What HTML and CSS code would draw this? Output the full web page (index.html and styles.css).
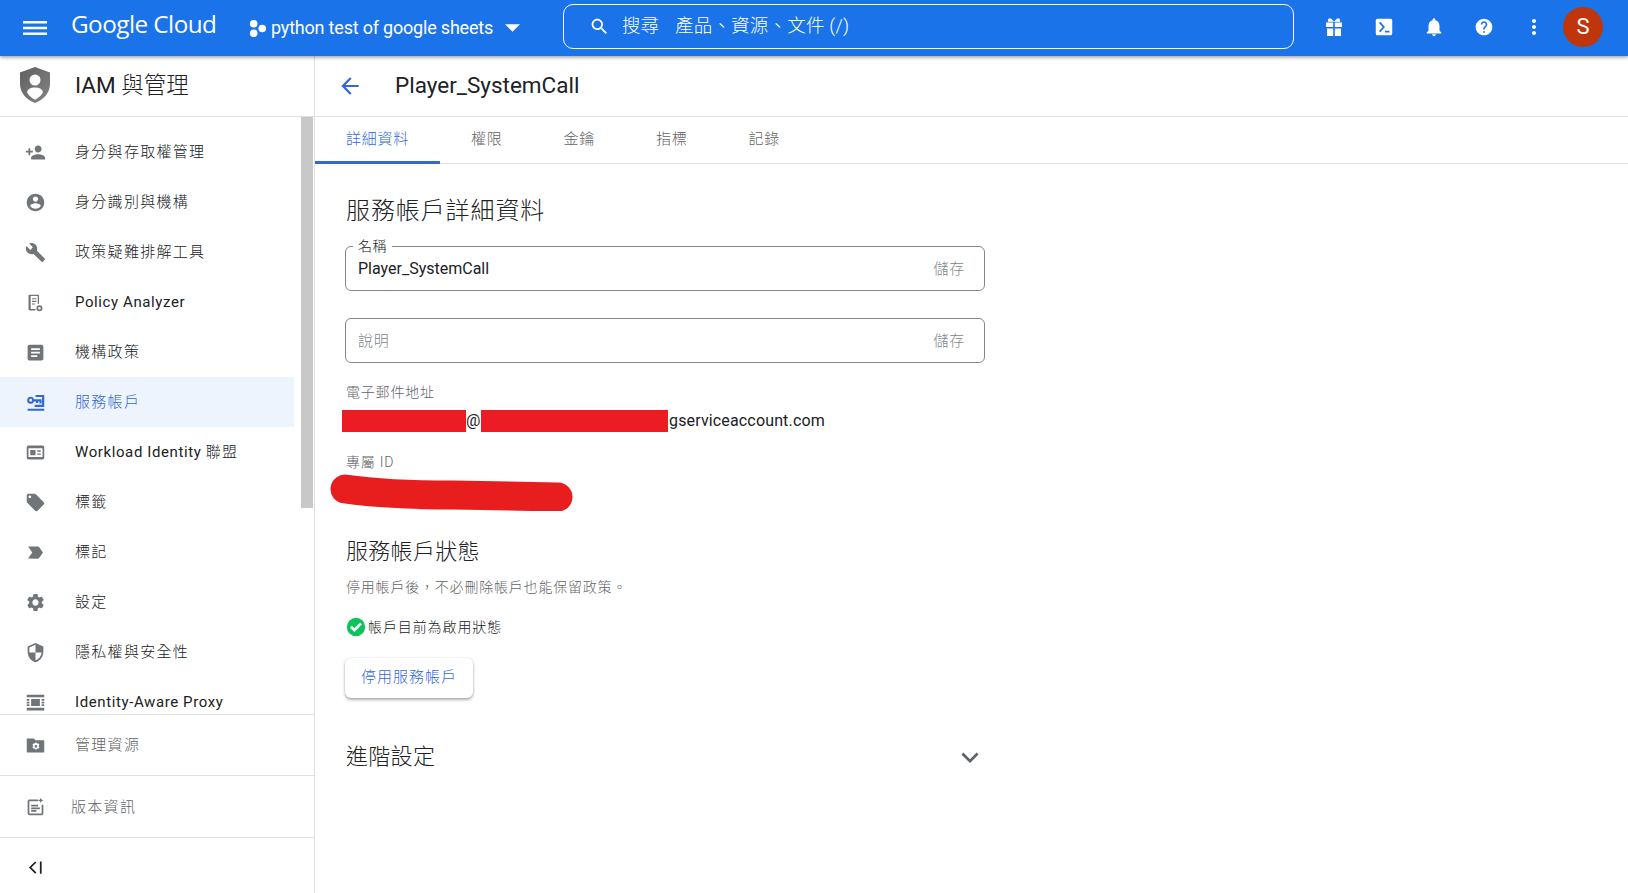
FILE: index.html
```html
<!DOCTYPE html>
<html lang="zh-Hant">
<head>
<meta charset="utf-8">
<title>Player_SystemCall - IAM 與管理</title>
<link rel="stylesheet" href="styles.css">
</head>
<body>
<header class="topbar">
  <svg class="menu-icon" viewBox="0 0 24 24"><path d="M0 19h24v-2.4H0zM0 13.2h24v-2.4H0zM0 5v2.4h24V5z"/></svg>
  <div class="brand">Google Cloud</div>
  <div class="project">
    <svg class="project-dots" viewBox="0 0 20 20"><circle cx="6" cy="5" r="4"/><circle cx="6" cy="15" r="4"/><circle cx="15" cy="10" r="4"/></svg>
    <span>python test of google sheets</span>
    <svg class="project-caret" viewBox="0 0 16 8"><path d="M0 0h16L8 8z"/></svg>
  </div>
  <div class="search">
    <svg class="search-icon" viewBox="0 0 24 24"><path d="M15.5 14h-.79l-.28-.27C15.41 12.59 16 11.11 16 9.5 16 5.91 13.09 3 9.5 3S3 5.91 3 9.5 5.91 16 9.5 16c1.61 0 3.09-.59 4.23-1.57l.27.28v.79l5 4.99L20.49 19l-4.99-5zm-6 0C7.01 14 5 11.99 5 9.5S7.01 5 9.5 5 14 7.01 14 9.5 11.99 14 9.5 14z"/></svg>
    <span class="search-a">搜尋</span><span class="search-b">產品、資源、文件 (/)</span>
  </div>
  <div class="actions">
    <svg class="action" viewBox="0 0 24 24"><path d="M4 7.500h7.200V12H4zM12.800 7.500H20V12h-7.200zM5 13.500h6.200V21H5zM12.800 13.500H19V21h-6.200zM6.500 3.500h2.500l3 3 3-3h2.500l.8 3.200H5.700z"/></svg>
    <svg class="action tight" viewBox="0 0 24 24"><path fill-rule="evenodd" d="M5 3h14a2 2 0 0 1 2 2v14a2 2 0 0 1-2 2H5a2 2 0 0 1-2-2V5a2 2 0 0 1 2-2zm1.500 4.500L10.500 12l-4 4.500 1.500 1.300 5-5.800-5-5.800zM13 16v2h5v-2z"/></svg>
    <svg class="action tight" viewBox="0 0 24 24"><path d="M12 22c1.100 0 2-.9 2-2h-4c0 1.100.89 2 2 2zm6-6v-5c0-3.070-1.640-5.640-4.500-6.320V4c0-.83-.67-1.500-1.500-1.500s-1.500.67-1.500 1.500v.68C7.630 5.360 6 7.920 6 11v5l-2 2v1h16v-1l-2-2z"/></svg>
    <svg class="action small" viewBox="0 0 24 24"><path d="M12 2C6.480 2 2 6.480 2 12s4.480 10 10 10 10-4.480 10-10S17.520 2 12 2zm1 17h-2v-2h2v2zm2.070-7.750l-.9.920C13.450 12.900 13 13.500 13 15h-2v-.5c0-1.100.45-2.100 1.170-2.830l1.240-1.260c.37-.36.59-.86.59-1.410 0-1.100-.9-2-2-2s-2 .9-2 2H8c0-2.210 1.790-4 4-4s4 1.790 4 4c0 .88-.36 1.680-.93 2.250z"/></svg>
    <svg class="action" viewBox="0 0 24 24"><path d="M12 8c1.100 0 2-.9 2-2s-.9-2-2-2-2 .9-2 2 .9 2 2 2zm0 2c-1.100 0-2 .9-2 2s.9 2 2 2 2-.9 2-2-.9-2-2-2zm0 6c-1.100 0-2 .9-2 2s.9 2 2 2 2-.9 2-2-.9-2-2-2z"/></svg>
    <div class="avatar">S</div>
  </div>
</header>

<div class="shell">
  <aside class="sidebar">
    <div class="side-title">
      <svg class="side-logo" viewBox="0 0 30 36"><defs><linearGradient id="shieldfill" x1="0" y1="0" x2="1" y2="1"><stop offset="0" stop-color="#5f5f5f"/><stop offset="1" stop-color="#858585"/></linearGradient></defs><path fill="url(#shieldfill)" d="M15 0 30 5.500V17c0 8.500-6 15.500-15 19C6 32.500 0 25.500 0 17V5.500z"/><circle cx="15" cy="13" r="5.500" fill="#fff"/><path fill="#fff" d="M15 20.500c4.500 0 7.800 2 7.800 4.500 0 .8-.2 1.300-.6 1.800-1.800 2.500-4.200 4.400-7.200 5.900-3-1.500-5.400-3.400-7.200-5.900-.4-.5-.6-1-.6-1.800 0-2.500 3.300-4.500 7.800-4.500z"/></svg>
      <span>IAM <span class="cjk">與管理</span></span>
    </div>
    <div class="nav-wrap">
      <nav class="nav">
        <a class="nav-item"><svg class="icon" viewBox="0 0 24 24"><path d="M15 12c2.210 0 4-1.790 4-4s-1.790-4-4-4-4 1.790-4 4 1.790 4 4 4zm-9-2V7H4v3H1v2h3v3h2v-3h3v-2H6zm9 4c-2.670 0-8 1.340-8 4v2h16v-2c0-2.660-5.330-4-8-4z"/></svg><span class="cjk">身分與存取權管理</span></a>
        <a class="nav-item"><svg class="icon" viewBox="0 0 24 24"><path d="M12 2C6.480 2 2 6.480 2 12s4.480 10 10 10 10-4.480 10-10S17.520 2 12 2zm0 3c1.660 0 3 1.340 3 3s-1.340 3-3 3-3-1.340-3-3 1.340-3 3-3zm0 14.200c-2.500 0-4.710-1.280-6-3.220.03-1.990 4-3.080 6-3.080 1.990 0 5.970 1.090 6 3.080-1.290 1.940-3.500 3.220-6 3.220z"/></svg><span class="cjk">身分識別與機構</span></a>
        <a class="nav-item"><svg class="icon" viewBox="0 0 24 24"><path d="M22.700 19l-9.100-9.100c.9-2.300.4-5-1.500-6.900-2-2-5-2.400-7.400-1.300L9 6 6 9 1.600 4.700C.4 7.100.9 10.100 2.900 12.100c1.900 1.900 4.600 2.400 6.900 1.500l9.100 9.100c.4.4 1 .4 1.400 0l2.300-2.300c.5-.4.5-1.100.1-1.400z"/></svg><span class="cjk">政策疑難排解工具</span></a>
        <a class="nav-item"><svg class="icon" viewBox="0 0 24 24"><path fill-rule="evenodd" d="M5 3h10a1 1 0 0 1 1 1v9.500h-1.500V4.500h-8v15H12V21H5.500A1.500 1.500 0 0 1 4 19.500V4a1 1 0 0 1 1-1zm3 4h5v1.300H8zm0 3h5v1.300H8zm0 3h3.500v1.300H8zM16.500 15a3.500 3.500 0 1 1 0 7 3.500 3.500 0 0 1 0-7zm0 2a1.500 1.500 0 1 0 0 3 1.500 1.500 0 0 0 0-3z"/></svg><span>Policy Analyzer</span></a>
        <a class="nav-item"><svg class="icon" viewBox="0 0 24 24"><path d="M19 3H5c-1.100 0-2 .9-2 2v14c0 1.100.9 2 2 2h14c1.100 0 2-.9 2-2V5c0-1.100-.9-2-2-2zm-5 14H7v-2h7v2zm3-4H7v-2h10v2zm0-4H7V7h10v2z"/></svg><span class="cjk">機構政策</span></a>
        <a class="nav-item active"><svg class="icon" viewBox="0 0 24 24"><path fill-rule="evenodd" d="M6.500 5.500a4 4 0 0 1 3.800 2.700H19v5h-2.500v-2.400H15v1.700h-2.500v-1.700h-2.200a4 4 0 1 1-3.800-5.300zm0 2.300a1.700 1.700 0 1 0 0 3.400 1.700 1.700 0 0 0 0-3.400zM12 3.500h10V17H11v-2.300h8.500V5.800H12zM3 19h19v2.500H3z"/></svg><span class="cjk">服務帳戶</span></a>
        <a class="nav-item"><svg class="icon" viewBox="0 0 24 24"><path fill-rule="evenodd" d="M4 4h16a2 2 0 0 1 2 2v12a2 2 0 0 1-2 2H4a2 2 0 0 1-2-2V6a2 2 0 0 1 2-2zM4 7v10h16V7zM6 9h6v6H6zM14 9.500h4V11h-4zM14 13h4v1.500h-4z"/></svg><span>Workload Identity <span class="cjk">聯盟</span></span></a>
        <a class="nav-item"><svg class="icon" viewBox="0 0 24 24"><path d="M21.410 11.580l-9-9C12.050 2.220 11.550 2 11 2H4c-1.100 0-2 .9-2 2v7c0 .55.22 1.050.59 1.420l9 9c.36.36.86.58 1.410.58.55 0 1.050-.22 1.410-.59l7-7c.37-.36.59-.86.59-1.410 0-.55-.23-1.060-.59-1.420zM5.500 7C4.670 7 4 6.330 4 5.500S4.670 4 5.500 4 7 4.670 7 5.500 6.330 7 5.500 7z"/></svg><span class="cjk">標籤</span></a>
        <a class="nav-item"><svg class="icon" viewBox="0 0 24 24"><path d="M3.500 18.990l11 .01c.67 0 1.270-.33 1.630-.84L20.500 12l-4.370-6.160c-.36-.51-.96-.84-1.630-.84l-11 .01L8.340 12 3.500 18.990z"/></svg><span class="cjk">標記</span></a>
        <a class="nav-item"><svg class="icon" viewBox="0 0 24 24"><path d="M19.140 12.940c.04-.3.06-.61.06-.94 0-.32-.02-.64-.07-.94l2.030-1.580c.18-.14.23-.41.12-.61l-1.920-3.320c-.12-.22-.37-.29-.59-.22l-2.390.96c-.5-.38-1.030-.7-1.620-.94l-.36-2.540c-.04-.24-.24-.41-.48-.41h-3.840c-.24 0-.43.17-.47.41l-.36 2.540c-.59.24-1.130.57-1.620.94l-2.390-.96c-.22-.08-.47 0-.59.22L2.740 8.870c-.12.21-.08.47.12.61l2.030 1.580c-.05.3-.09.63-.09.94s.02.64.07.94l-2.030 1.580c-.18.14-.23.41-.12.61l1.920 3.320c.12.22.37.29.59.22l2.390-.96c.5.38 1.030.7 1.620.94l.36 2.540c.05.24.24.41.48.41h3.840c.24 0 .44-.17.47-.41l.36-2.540c.59-.24 1.130-.56 1.620-.94l2.390.96c.22.08.47 0 .59-.22l1.920-3.320c.12-.22.07-.47-.12-.61l-2.010-1.580zM12 15.600c-1.980 0-3.600-1.620-3.600-3.600s1.620-3.600 3.600-3.600 3.600 1.620 3.600 3.600-1.620 3.600-3.600 3.600z"/></svg><span class="cjk">設定</span></a>
        <a class="nav-item"><svg class="icon" viewBox="0 0 24 24"><path d="M12 1L3 5v6c0 5.550 3.840 10.740 9 12 5.160-1.260 9-6.450 9-12V5l-9-4zm0 10.990h7c-.53 4.120-3.280 7.790-7 8.940V12H5V6.300l7-3.110v8.800z"/></svg><span class="cjk">隱私權與安全性</span></a>
        <a class="nav-item"><svg class="icon" viewBox="0 0 24 24"><path fill-rule="evenodd" d="M2 3h20v3H2zM2 18h20v3H2zM2 8h3v2H2zM2 11h3v2H2zM2 14h3v2H2zM19 8h3v2h-3zM19 11h3v2h-3zM19 14h3v2h-3zM7 8h10v8H7z"/></svg><span>Identity-Aware Proxy</span></a>
      </nav>
      <div class="scroll-track"><div class="scroll-thumb"></div></div>
    </div>
    <a class="side-row"><svg class="icon" viewBox="0 0 24 24"><path fill-rule="evenodd" d="M2 4h8l2 2h9a1 1 0 0 1 1 1v12a1 1 0 0 1-1 1H3a1 1 0 0 1-1-1zm10 4.500-1 1.200-1.500-.1-.9 1.500.8 1.400-.8 1.400.9 1.500 1.500-.1 1 1.200h1l1-1.200 1.500.1.900-1.500-.8-1.400.8-1.400-.9-1.500-1.500.1-1-1.200zm.5 3a1.500 1.500 0 1 1 0 3 1.500 1.500 0 0 1 0-3z"/></svg><span class="cjk">管理資源</span></a>
    <a class="side-row release"><svg class="icon" viewBox="0 0 24 24"><path fill-rule="evenodd" d="M5 4h10v2H5v14h14V10h2v10a2 2 0 0 1-2 2H5a2 2 0 0 1-2-2V6a2 2 0 0 1 2-2zm2 6h8v2H7zm0 3h10v2H7zm0 3h6v2H7zM18 2l.9 2.100L21 5l-2.100.9L18 8l-.9-2.100L15 5l2.100-.9z"/></svg><span class="cjk">版本資訊</span></a>
    <div class="collapse"><svg class="collapse-icon" viewBox="0 0 24 24"><path d="M13 6.400 11.600 5 4.500 12l7.100 7 1.400-1.400L7.300 12zM17 5h2v14h-2z"/></svg></div>
  </aside>

  <main class="main">
    <div class="page-title">
      <svg class="back" viewBox="0 0 24 24"><path d="M20 11H7.830l5.590-5.590L12 4l-8 8 8 8 1.410-1.410L7.830 13H20v-2z"/></svg>
      <h1>Player_SystemCall</h1>
    </div>
    <div class="tabs">
      <a class="tab current">詳細資料</a>
      <a class="tab">權限</a>
      <a class="tab">金鑰</a>
      <a class="tab">指標</a>
      <a class="tab">記錄</a>
    </div>
    <div class="content">
      <h2 class="heading-lg">服務帳戶詳細資料</h2>
      <div class="field named">
        <span class="field-label">名稱</span>
        <span class="field-value">Player_SystemCall</span>
        <span class="field-save">儲存</span>
      </div>
      <div class="field described">
        <span class="field-hint">說明</span>
        <span class="field-save">儲存</span>
      </div>
      <div class="meta-label email-label">電子郵件地址</div>
      <div class="email">
        <span class="redact redact-a"></span><span>@</span><span class="redact redact-b"></span><span>gserviceaccount.com</span>
      </div>
      <div class="meta-label id-label">專屬 ID</div>
      <svg class="scribble" viewBox="0 0 244 38"><path d="M15 16C50 21 90 22 123 22L228 24" fill="none" stroke="#e81e1e" stroke-width="29" stroke-linecap="round"/></svg>
      <h2 class="heading-md status-heading">服務帳戶狀態</h2>
      <p class="desc">停用帳戶後，不必刪除帳戶也能保留政策。</p>
      <div class="status">
        <svg class="status-icon" viewBox="0 0 24 24"><circle cx="12" cy="12" r="11" fill="#0cc35d"/><path fill="#fff" d="M10 18 4.800 12.800l2.200-2.200 3 3 7-7.100 2.200 2.200z"/></svg>
        <span>帳戶目前為啟用狀態</span>
      </div>
      <button class="btn" type="button">停用服務帳戶</button>
      <div class="advanced">
        <h2 class="heading-md">進階設定</h2>
        <svg class="chevron" viewBox="0 0 24 24"><path d="M18.600 7.600 12 14.200 5.400 7.600 3.500 9.500 12 18l8.500-8.500z"/></svg>
      </div>
    </div>
  </main>
</div>
</body>
</html>
```

FILE: styles.css
```css
* { box-sizing: border-box; }
html, body { margin: 0; height: 100%; }
body {
  width: 1628px;
  height: 893px;
  overflow: hidden;
  background: #fff;
  color: #202124;
  font-family: Roboto, "Noto Sans CJK TC", sans-serif;
  font-size: 15px;
  line-height: 20px;
  display: flex;
  flex-direction: column;
}
h1, h2, p { margin: 0; font-weight: 400; }
.cjk { font-weight: 300; }

/* top bar */
.topbar {
  position: relative;
  z-index: 2;
  flex: none;
  height: 56px;
  background: #1a73e8;
  color: #fff;
  display: flex;
  align-items: center;
  box-shadow: 0 1px 4px rgba(0, 0, 0, .45);
}
.topbar svg { fill: #fff; flex: none; }
.menu-icon { width: 24px; height: 24px; margin-left: 23px; }
.brand {
  margin-left: 24px;
  width: 146px;
  font-family: "Open Sans", sans-serif;
  font-size: 24.300px;
  line-height: 30px;
  letter-spacing: -.55px;
  white-space: nowrap;
  margin-top: -8px;
}
.project { margin-left: 31px; display: flex; align-items: center; width: 310px; font-size: 18px; letter-spacing: -.2px; }
.project-dots { width: 19px; height: 19px; margin-right: 4px; }
.project-caret { width: 15px; height: 8px; margin-left: 12px; }
.search {
  margin: -4px 0 0 5px;
  width: 731px;
  height: 45px;
  border: 1px solid #fff;
  border-radius: 10px;
  display: flex;
  align-items: center;
  font-size: 18.500px;
  font-weight: 300;
}
.search-icon { width: 21px; height: 21px; margin-left: 25px; }
.search-a { margin-left: 12px; }
.search-b { margin-left: 16px; letter-spacing: .2px; }
.actions { margin: -2px 0 0 28px; display: flex; align-items: center; }
.action { width: 24px; height: 24px; margin-right: 26px; }
.tight { padding: 1px; }
.small { padding: 2px; }
.avatar {
  width: 40px;
  height: 40px;
  margin-left: -9px;
  border-radius: 50%;
  background: #bf360c;
  display: flex;
  align-items: center;
  justify-content: center;
  font-size: 22px;
}

/* shell */
.shell { flex: 1; min-height: 0; display: flex; }
.sidebar {
  flex: none;
  width: 315px;
  border-right: 1px solid #e0e0e0;
  display: flex;
  flex-direction: column;
}
.side-title {
  flex: none;
  height: 61px;
  border-bottom: 1px solid #e0e0e0;
  padding: 0 0 3px 20px;
  display: flex;
  align-items: center;
  font-size: 22.500px;
  line-height: 30px;
}
.side-logo { width: 30px; height: 36px; margin-right: 25px; }
.nav-wrap { flex: 1; min-height: 0; display: flex; overflow: hidden; }
.nav { flex: none; width: 301px; padding: 10px 7px 0 0; }
.nav-item, .side-row {
  display: flex;
  align-items: center;
  height: 50px;
  padding-left: 24.500px;
  letter-spacing: .6px;
  color: #202124;
  white-space: nowrap;
}
.nav-item .cjk, .side-row .cjk { letter-spacing: 1.300px; }
.icon { flex: none; width: 21px; height: 21px; margin-right: 29.500px; fill: #70757a; }
.active { background: #eef4fd; color: #3367d6; }
.active .icon { fill: #3367d6; }
.scroll-track { flex: none; width: 13px; padding-right: 1px; }
.scroll-thumb { height: 391px; background: #c8c8c8; }
.side-row {
  flex: none;
  height: 61px;
  border-top: 1px solid #e0e0e0;
  color: #5f6368;
}
.release { height: 62px; }
.release .icon { margin-right: 25.500px; }
.collapse {
  flex: none;
  height: 56px;
  border-top: 1px solid #e0e0e0;
  padding: 3px 0 0 24.500px;
  display: flex;
  align-items: center;
}
.collapse-icon { width: 21px; height: 21px; fill: #202124; }

/* main */
.main { flex: 1; min-width: 0; }
.page-title {
  height: 61px;
  border-bottom: 1px solid #e0e0e0;
  display: flex;
  align-items: center;
  padding-left: 23px;
}
.back { width: 26px; height: 26px; fill: #3367d6; margin-left: -1px; }
.page-title h1 { margin-left: 32px; font-size: 22.500px; line-height: 30px; margin-top: -3px; }
.tabs { height: 47px; border-bottom: 1px solid #e0e0e0; display: flex; }
.tab {
  height: 47px;
  padding: 0 30px 4px 31px;
  display: flex;
  align-items: center;
  color: #5f6368;
  font-weight: 300;
  letter-spacing: .75px;
}
.current { padding: 0 31px 1px; color: #3367d6; border-bottom: 3px solid #3367d6; }
.content { padding-left: 30px; width: 670px; }
.heading-lg { height: 36px; margin: 29px 0 0 1px; font-size: 24px; font-weight: 300; line-height: 36px; letter-spacing: .9px; }
.heading-md { margin-left: 1px; font-size: 22px; font-weight: 300; line-height: 32px; letter-spacing: .3px; }
.field {
  position: relative;
  height: 45px;
  border: 1px solid #80868b;
  border-radius: 6px;
  display: flex;
  align-items: center;
  justify-content: space-between;
  padding: 0 19px 0 12px;
}
.named { margin-top: 17px; }
.described { margin-top: 27px; }
.field-label {
  position: absolute;
  top: -10px;
  left: 7px;
  padding: 0 5px;
  background: #fff;
  font-size: 14px;
  font-weight: 300;
  line-height: 18px;
  letter-spacing: .4px;
}
.field-value { font-size: 16px; }
.field-hint, .field-save { color: #80868b; font-size: 15px; font-weight: 300; letter-spacing: .75px; }
.meta-label { margin-left: 1px; font-size: 14px; font-weight: 300; line-height: 20px; letter-spacing: .8px; color: #5f6368; }
.email-label { margin-top: 19px; }
.email { display: flex; align-items: center; height: 22px; margin: 8px 0 0 -3px; font-size: 16px; line-height: 22px; letter-spacing: .15px; color: #202124; }
.email span:nth-child(2) { width: 15px; }
.redact { height: 22px; background: #ed1c24; flex: none; }
.redact-a { width: 124px; }
.redact-b { width: 187px; margin-right: 1px; }
.id-label { margin-top: 20px; }
.scribble { display: block; width: 244px; height: 38px; margin: 1px 0 0 -15px; }
.status-heading { margin-top: 25px; }
.desc { margin: 9px 0 0 1px; line-height: 20px; font-size: 14px; font-weight: 300; letter-spacing: .8px; color: #5f6368; }
.status { display: flex; align-items: center; margin-top: 19px; height: 22px; font-size: 14px; font-weight: 300; letter-spacing: .9px; }
.status-icon { width: 20px; height: 20px; margin-left: 1px; margin-right: 2px; flex: none; }
.btn {
  display: block;
  margin-top: 20px;
  width: 128px;
  height: 40px;
  border: 0;
  border-radius: 6px;
  background: #fff;
  box-shadow: 0 2px 3px rgba(60, 64, 67, .4), 0 0 2px rgba(60, 64, 67, .2);
  color: #3367d6;
  font: inherit;
  font-size: 15px;
  font-weight: 300;
  letter-spacing: 1px;
  padding: 0 0 3px;
}
.advanced { margin-top: 43px; display: flex; align-items: center; justify-content: space-between; padding-right: 3px; }
.chevron { width: 24px; height: 24px; fill: #5f6368; }
```
